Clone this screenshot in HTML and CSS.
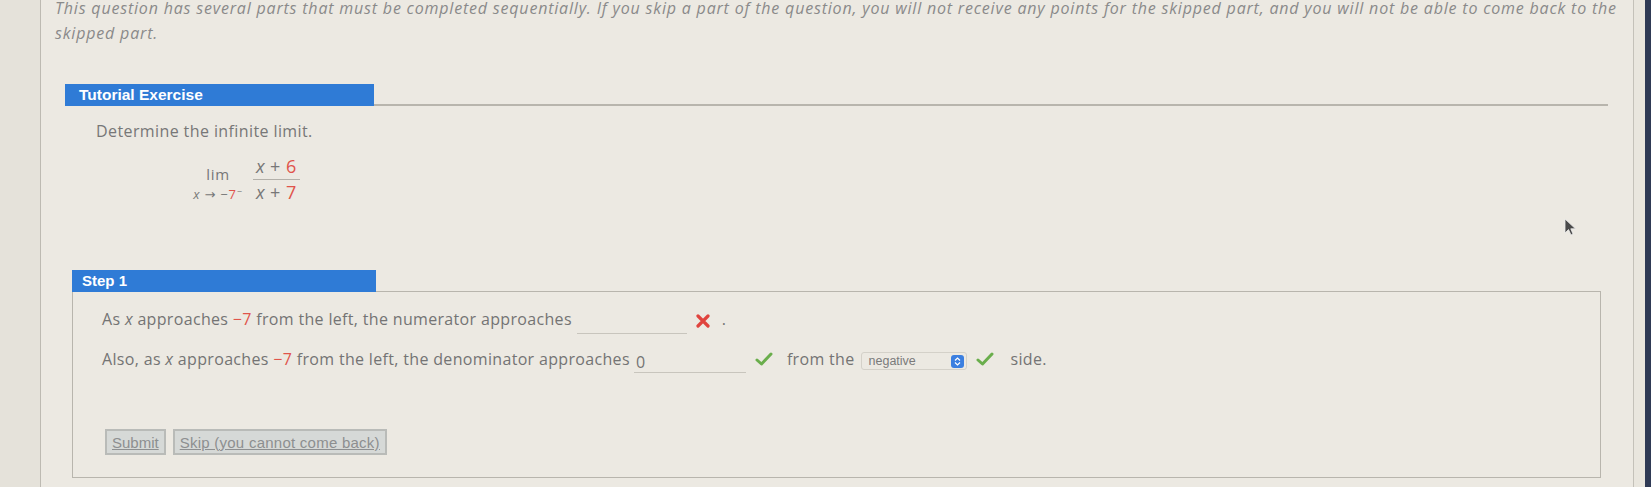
FILE: index.html
```html
<!DOCTYPE html>
<html>
<head>
<meta charset="utf-8">
<link rel="stylesheet" href="styles.css">
</head>
<body>
<div class="screen">
  <div class="gutter"></div>
  <div class="page">
    <p class="intro">This question has several parts that must be completed sequentially. If you skip a part of the question, you will not receive any points for the skipped part, and you will not be able to come back to the skipped part.</p>

    <section class="tutorial">
      <div class="sec-head">
        <div class="tab">Tutorial Exercise</div>
        <div class="rule"></div>
      </div>
      <p class="prompt">Determine the infinite limit.</p>
      <div class="limit">
        <div class="lim">
          <span class="lim-word">lim</span>
          <span class="lim-sub"><i>x</i> → −<span class="red">7</span><sup>−</sup></span>
        </div>
        <div class="frac">
          <span class="num"><i>x</i> + <span class="red">6</span></span>
          <span class="den"><i>x</i> + <span class="red">7</span></span>
        </div>
      </div>
    </section>

    <section class="step">
      <div class="sec-head step-head">
        <div class="tab tab-step">Step 1</div>
        <div class="rule rule-step"></div>
      </div>
      <div class="step-box">
        <div class="row row1">
          <span>As <i>x</i> approaches <span class="red">−7</span> from the left, the numerator approaches</span>
          <span class="blank blank1"></span>
          <svg class="xmark" width="14" height="14" viewBox="0 0 14 14"><path d="M2 2 L12 12 M12 2 L2 12" stroke="#e0443e" stroke-width="3.2" stroke-linecap="round"/></svg>
          <span class="dot">.</span>
        </div>
        <div class="row row2">
          <span>Also, as <i>x</i> approaches <span class="red">−7</span> from the left, the denominator approaches</span>
          <span class="blank blank2">0</span>
          <svg class="check" width="18" height="14" viewBox="0 0 18 14"><path d="M2 8 L6.5 12 L16 2" fill="none" stroke="#6aae4c" stroke-width="3" stroke-linecap="round" stroke-linejoin="round"/></svg>
          <span class="from">from the</span>
          <span class="select">
            <span class="sel-text">negative</span>
            <svg class="spin" width="13" height="13" viewBox="0 0 13 13"><rect x="0" y="0" width="13" height="13" rx="3" fill="#3b7fe0"/><path d="M4 5.5 L6.5 3 L9 5.5 M4 7.5 L6.5 10 L9 7.5" fill="none" stroke="#fff" stroke-width="1.2"/></svg>
          </span>
          <svg class="check check2" width="18" height="14" viewBox="0 0 18 14"><path d="M2 8 L6.5 12 L16 2" fill="none" stroke="#6aae4c" stroke-width="3" stroke-linecap="round" stroke-linejoin="round"/></svg>
          <span class="side">side.</span>
        </div>
        <div class="buttons">
          <button class="btn">Submit</button>
          <button class="btn btn-skip">Skip (you cannot come back)</button>
        </div>
      </div>
    </section>

    <svg class="cursor" width="14" height="20" viewBox="0 0 14 20"><path d="M1 1 L1 15 L4.5 11.5 L7 17 L9 16 L6.8 10.8 L11.5 10.8 Z" fill="#4a4a4a" stroke="#eee" stroke-width="0.8"/></svg>
  </div>
  <div class="margin-r"></div>
  <div class="edge"></div>
</div>
</body>
</html>
```

FILE: styles.css
```css
html, body {
  margin: 0;
  padding: 0;
  background: #ebe8e0;
}
body {
  width: 1651px;
  height: 487px;
  overflow: hidden;
  font-family: "Open Sans", "DejaVu Sans", sans-serif;
  color: #747474;
}
.screen {
  display: flex;
  height: 487px;
}
.gutter {
  width: 40px;
  background: #e5e2da;
  border-right: 1px solid #bdbab2;
  flex: none;
}
.page {
  position: relative;
  flex: 1;
  border-right: 1px solid #c4c1b9;
  background: #ece9e2;
}
.margin-r {
  width: 11px;
  background: #e9e6de;
  flex: none;
}
.edge {
  width: 6px;
  background: #2f3a55;
  flex: none;
}
.intro {
  margin: -4px 0 0 14px;
  width: 1572px;
  font-style: italic;
  font-size: 16px;
  letter-spacing: 0.81px;
  line-height: 25px;
  color: #8a8a8a;
}
.tutorial {
  margin-top: 38px;
}
.sec-head {
  display: flex;
  align-items: flex-end;
  margin-left: 24px;
  margin-right: 25px;
}
.tab {
  width: 309px;
  height: 22px;
  background: #2f7bd6;
  color: #fff;
  font-family: "Liberation Sans", Arial, sans-serif;
  font-weight: bold;
  font-size: 15.5px;
  line-height: 22px;
  padding-left: 14px;
  box-sizing: border-box;
  flex: none;
}
.rule {
  flex: 1;
  border-bottom: 2px solid #b8b5ad;
}
.prompt {
  margin: 15px 0 0 55px;
  font-size: 16px;
  letter-spacing: 0.4px;
  line-height: 20px;
  color: #777;
}
.limit {
  display: flex;
  align-items: center;
  margin: 13px 0 0 144px;
  font-size: 18px;
  color: #777;
}
.lim {
  display: flex;
  flex-direction: column;
  align-items: center;
  width: 66px;
  margin-top: 7px;
}
.lim-word {
  font-size: 15px;
  line-height: 21px;
  letter-spacing: 0.6px;
}
.lim-sub {
  font-size: 13px;
  line-height: 18px;
  letter-spacing: 0.8px;
}
.lim-sub sup {
  font-size: 9px;
  vertical-align: 4px;
  line-height: 0;
}
.frac {
  display: flex;
  flex-direction: column;
  align-items: center;
  margin-left: 2px;
}
.num {
  line-height: 25px;
  padding: 0 3px;
  border-bottom: 1px solid #b3b0a9;
  letter-spacing: 0.4px;
}
.den {
  line-height: 25px;
  letter-spacing: 0.4px;
}
.red {
  color: #e0544b;
}
.step {
  margin-top: 65px;
}
.step-head {
  margin-left: 31px;
  margin-right: 32px;
}
.tab-step {
  width: 304px;
  padding-left: 10px;
  font-size: 15px;
}
.rule-step {
  border-bottom: 1px solid #b8b5ad;
}
.step-box {
  margin-left: 31px;
  margin-right: 32px;
  height: 186px;
  border: 1px solid #b8b5ad;
  border-top: none;
  box-sizing: border-box;
  padding: 15px 0 0 29px;
  font-size: 16px;
  letter-spacing: 0.33px;
  color: #747474;
}
.row {
  display: flex;
  align-items: center;
  height: 24px;
  white-space: nowrap;
}
.row2 {
  margin-top: 16px;
}
.blank {
  display: inline-block;
  height: 20px;
  border-bottom: 1px solid #c8c5bd;
  flex: none;
}
.blank1 {
  width: 110px;
  margin-left: 5px;
  margin-top: 8px;
}
.xmark {
  margin-left: 9px;
  margin-top: 3px;
}
.dot {
  margin-left: 12px;
}
.blank2 {
  width: 110px;
  margin-left: 4px;
  line-height: 20px;
  padding-left: 2px;
  margin-top: 6px;
}
.check {
  margin-left: 9px;
}
.from {
  margin-left: 14px;
}
.select {
  display: inline-flex;
  align-items: center;
  justify-content: space-between;
  width: 106px;
  height: 18px;
  margin-left: 6px;
  border: 1px solid #d4d1c9;
  border-radius: 3px;
  box-sizing: border-box;
  padding: 0 2px 0 7px;
  margin-top: 4px;
  letter-spacing: 0;
}
.sel-text {
  font-family: "Liberation Sans", Arial, sans-serif;
  font-size: 12.5px;
  color: #7a7a7a;
}
.check2 {
  margin-left: 9px;
}
.side {
  margin-left: 17px;
}
.buttons {
  display: flex;
  gap: 7px;
  margin-top: 58px;
  margin-left: 3px;
}
.btn {
  height: 26px;
  padding: 0 5px;
  background: #d6d9d7;
  border: 2px solid #b9bbb8;
  font-family: "Liberation Sans", Arial, sans-serif;
  font-size: 15px;
  color: #8d8f90;
  text-decoration: underline;
}
.btn-skip {
  letter-spacing: 0.25px;
}
.cursor {
  position: absolute;
  left: 1523px;
  top: 218px;
}
```
